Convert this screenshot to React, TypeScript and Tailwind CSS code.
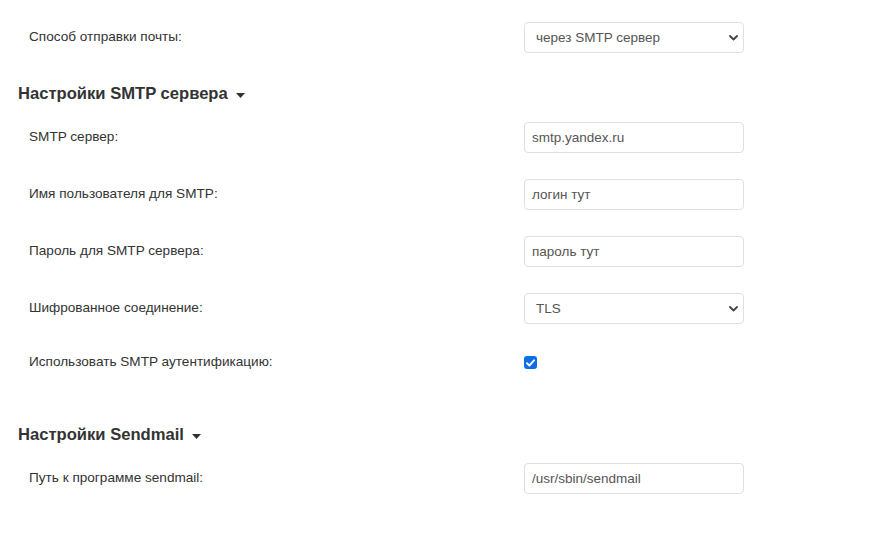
import React from "react";

const Caret = () => (
  <svg width="9" height="5" viewBox="0 0 9 5" className="ml-[8px] mt-[2px]">
    <path d="M0 0 L9 0 L4.5 5 Z" fill="#333" />
  </svg>
);

const Chevron = () => (
  <svg width="9" height="6" viewBox="0 0 9 6" className="absolute right-[5px] top-[12px]">
    <path d="M1 1 L4.5 4.5 L8 1" stroke="#444" strokeWidth="1.8" fill="none" strokeLinecap="round" strokeLinejoin="round" />
  </svg>
);

const Label = ({ children }: { children: React.ReactNode }) => (
  <div className="w-[524px] shrink-0 pl-[29px] text-[13.6px] text-[#333]">{children}</div>
);

const Input = ({ value }: { value: string }) => (
  <div className="w-[220px] h-[31px] border border-[#dcdfe3] rounded-[4px] flex items-center pl-[7px] pt-[1px] text-[13.5px] text-[#555] bg-white">
    {value}
  </div>
);

const Select = ({ value }: { value: string }) => (
  <div className="relative w-[220px] h-[31px] border border-[#dcdfe3] rounded-[4px] flex items-center pl-[11px] pt-[1px] text-[13.5px] text-[#555] bg-white">
    {value}
    <Chevron />
  </div>
);

const Row = ({ label, children, className = "" }: { label: string; children: React.ReactNode; className?: string }) => (
  <div className={"flex items-center " + className}>
    <Label>{label}</Label>
    {children}
  </div>
);

const Heading = ({ children, className = "" }: { children: React.ReactNode; className?: string }) => (
  <div className={"flex items-center pl-[18px] h-[20px] text-[16.6px] font-semibold text-[#333] " + className}>
    {children}
    <Caret />
  </div>
);

export default function App() {
  return (
    <div
      className="w-[885px] h-[542px] bg-white flex flex-col pt-[22px]"
      style={{ fontFamily: '"Liberation Sans", Arial, sans-serif' }}
    >
      <Row label="Способ отправки почты:">
        <Select value="через SMTP сервер" />
      </Row>
      <Heading className="mt-[31px]">Настройки SMTP сервера</Heading>
      <Row label="SMTP сервер:" className="mt-[18px]">
        <Input value="smtp.yandex.ru" />
      </Row>
      <Row label="Имя пользователя для SMTP:" className="mt-[26px]">
        <Input value="логин тут" />
      </Row>
      <Row label="Пароль для SMTP сервера:" className="mt-[26px]">
        <Input value="пароль тут" />
      </Row>
      <Row label="Шифрованное соединение:" className="mt-[26px]">
        <Select value="TLS" />
      </Row>
      <Row label="Использовать SMTP аутентификацию:" className="mt-[23px] h-[31px]">
        <div className="w-[13px] h-[13px] rounded-[3px] bg-[#0b6fe8] flex items-center justify-center">
          <svg width="9" height="8" viewBox="0 0 9 8">
            <path d="M1 4.2 L3.4 6.5 L8 1.3" stroke="white" strokeWidth="1.9" fill="none" strokeLinecap="round" strokeLinejoin="round" />
          </svg>
        </div>
      </Row>
      <Heading className="mt-[47px]">Настройки Sendmail</Heading>
      <Row label="Путь к программе sendmail:" className="mt-[18px]">
        <Input value="/usr/sbin/sendmail" />
      </Row>
    </div>
  );
}
